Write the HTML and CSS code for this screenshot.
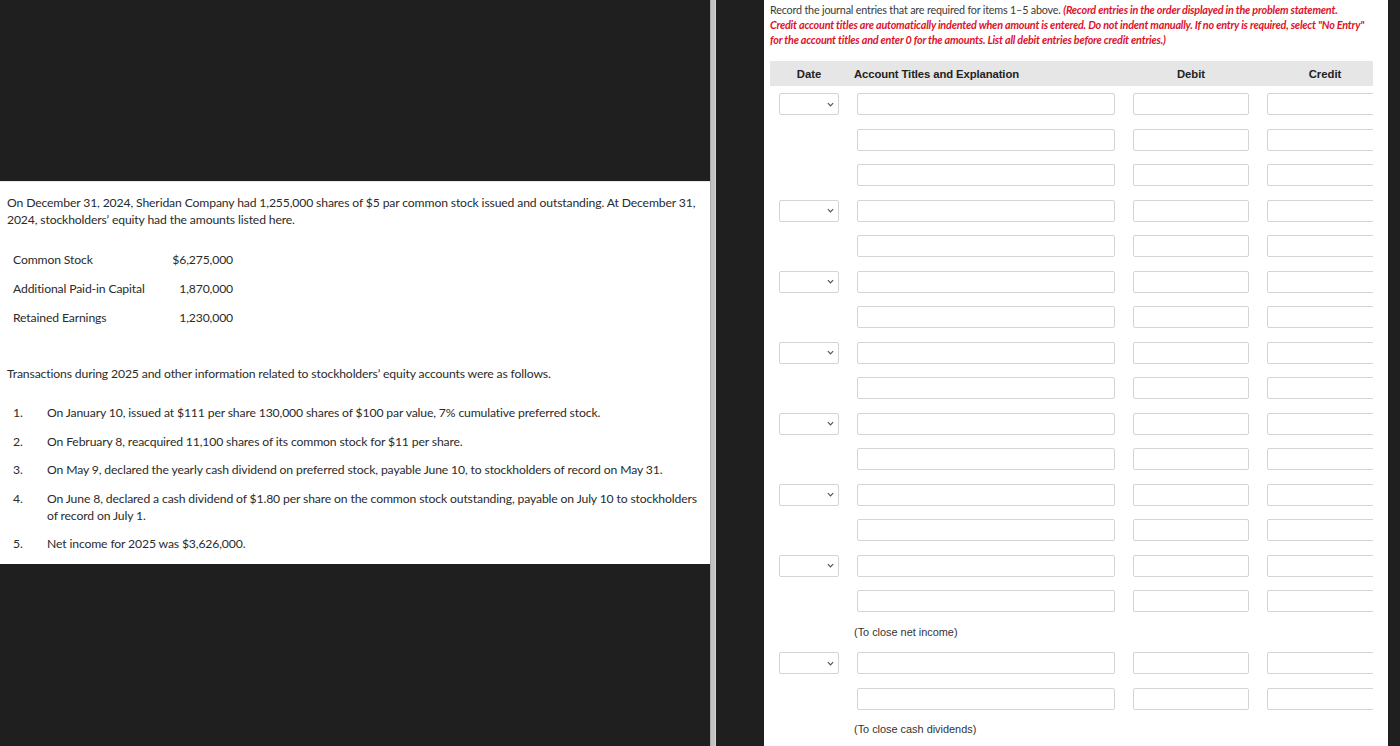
FILE: index.html
```html
<!DOCTYPE html>
<html>
<head>
<meta charset="utf-8">
<link rel="stylesheet" href="styles.css">
</head>
<body>
<div class="page">
  <div class="left-col">
    <div class="problem">
      <p class="intro">On December 31, 2024, Sheridan Company had 1,255,000 shares of $5 par common stock issued and outstanding. At December 31, 2024, stockholders’ equity had the amounts listed here.</p>
      <div class="equity">
        <div class="eq-row"><span class="eq-label">Common Stock</span><span class="eq-val">$6,275,000</span></div>
        <div class="eq-row"><span class="eq-label">Additional Paid-in Capital</span><span class="eq-val">1,870,000</span></div>
        <div class="eq-row"><span class="eq-label">Retained Earnings</span><span class="eq-val">1,230,000</span></div>
      </div>
      <p class="trans">Transactions during 2025 and other information related to stockholders’ equity accounts were as follows.</p>
      <ol class="items">
        <li><span class="num">1.</span><span class="txt">On January 10, issued at $111 per share 130,000 shares of $100 par value, 7% cumulative preferred stock.</span></li>
        <li><span class="num">2.</span><span class="txt">On February 8, reacquired 11,100 shares of its common stock for $11 per share.</span></li>
        <li><span class="num">3.</span><span class="txt">On May 9, declared the yearly cash dividend on preferred stock, payable June 10, to stockholders of record on May 31.</span></li>
        <li><span class="num">4.</span><span class="txt">On June 8, declared a cash dividend of $1.80 per share on the common stock outstanding, payable on July 10 to stockholders of record on July 1.</span></li>
        <li><span class="num">5.</span><span class="txt">Net income for 2025 was $3,626,000.</span></li>
      </ol>
    </div>
  </div>
  <div class="divider"></div>
  <div class="gap"></div>
  <div class="right-col">
    <p class="instr">Record the journal entries that are required for items 1–5 above. <em class="red">(Record entries in the order displayed in the problem statement.<br>Credit account titles are automatically indented when amount is entered. Do not indent manually. If no entry is required, select "No Entry"<br>for the account titles and enter 0 for the amounts. List all debit entries before credit entries.)</em></p>
    <div class="journal">
      <div class="jrow head">
        <div class="hc c-date">Date</div>
        <div class="hc c-acct">Account Titles and Explanation</div>
        <div class="hc c-amt">Debit</div>
        <div class="hc c-amt">Credit</div>
      </div>

      <div class="jrow"><div class="cell"><div class="sel"><svg class="chev" viewBox="0 0 8 5"><path d="M1 1l3 3 3-3" /></svg></div></div><div class="cell"><div class="box acct"></div></div><div class="cell"><div class="box amt"></div></div><div class="cell"><div class="box amt"></div></div></div>
      <div class="jrow"><div class="cell"></div><div class="cell"><div class="box acct"></div></div><div class="cell"><div class="box amt"></div></div><div class="cell"><div class="box amt"></div></div></div>
      <div class="jrow"><div class="cell"></div><div class="cell"><div class="box acct"></div></div><div class="cell"><div class="box amt"></div></div><div class="cell"><div class="box amt"></div></div></div>

      <div class="jrow"><div class="cell"><div class="sel"><svg class="chev" viewBox="0 0 8 5"><path d="M1 1l3 3 3-3" /></svg></div></div><div class="cell"><div class="box acct"></div></div><div class="cell"><div class="box amt"></div></div><div class="cell"><div class="box amt"></div></div></div>
      <div class="jrow"><div class="cell"></div><div class="cell"><div class="box acct"></div></div><div class="cell"><div class="box amt"></div></div><div class="cell"><div class="box amt"></div></div></div>

      <div class="jrow"><div class="cell"><div class="sel"><svg class="chev" viewBox="0 0 8 5"><path d="M1 1l3 3 3-3" /></svg></div></div><div class="cell"><div class="box acct"></div></div><div class="cell"><div class="box amt"></div></div><div class="cell"><div class="box amt"></div></div></div>
      <div class="jrow"><div class="cell"></div><div class="cell"><div class="box acct"></div></div><div class="cell"><div class="box amt"></div></div><div class="cell"><div class="box amt"></div></div></div>

      <div class="jrow"><div class="cell"><div class="sel"><svg class="chev" viewBox="0 0 8 5"><path d="M1 1l3 3 3-3" /></svg></div></div><div class="cell"><div class="box acct"></div></div><div class="cell"><div class="box amt"></div></div><div class="cell"><div class="box amt"></div></div></div>
      <div class="jrow"><div class="cell"></div><div class="cell"><div class="box acct"></div></div><div class="cell"><div class="box amt"></div></div><div class="cell"><div class="box amt"></div></div></div>

      <div class="jrow"><div class="cell"><div class="sel"><svg class="chev" viewBox="0 0 8 5"><path d="M1 1l3 3 3-3" /></svg></div></div><div class="cell"><div class="box acct"></div></div><div class="cell"><div class="box amt"></div></div><div class="cell"><div class="box amt"></div></div></div>
      <div class="jrow"><div class="cell"></div><div class="cell"><div class="box acct"></div></div><div class="cell"><div class="box amt"></div></div><div class="cell"><div class="box amt"></div></div></div>

      <div class="jrow"><div class="cell"><div class="sel"><svg class="chev" viewBox="0 0 8 5"><path d="M1 1l3 3 3-3" /></svg></div></div><div class="cell"><div class="box acct"></div></div><div class="cell"><div class="box amt"></div></div><div class="cell"><div class="box amt"></div></div></div>
      <div class="jrow"><div class="cell"></div><div class="cell"><div class="box acct"></div></div><div class="cell"><div class="box amt"></div></div><div class="cell"><div class="box amt"></div></div></div>

      <div class="jrow"><div class="cell"><div class="sel"><svg class="chev" viewBox="0 0 8 5"><path d="M1 1l3 3 3-3" /></svg></div></div><div class="cell"><div class="box acct"></div></div><div class="cell"><div class="box amt"></div></div><div class="cell"><div class="box amt"></div></div></div>
      <div class="jrow"><div class="cell"></div><div class="cell"><div class="box acct"></div></div><div class="cell"><div class="box amt"></div></div><div class="cell"><div class="box amt"></div></div></div>
      <div class="note">(To close net income)</div>

      <div class="jrow"><div class="cell"><div class="sel"><svg class="chev" viewBox="0 0 8 5"><path d="M1 1l3 3 3-3" /></svg></div></div><div class="cell"><div class="box acct"></div></div><div class="cell"><div class="box amt"></div></div><div class="cell"><div class="box amt"></div></div></div>
      <div class="jrow"><div class="cell"></div><div class="cell"><div class="box acct"></div></div><div class="cell"><div class="box amt"></div></div><div class="cell"><div class="box amt"></div></div></div>
      <div class="note">(To close cash dividends)</div>
    </div>
  </div>
  <div class="edge"></div>
</div>
</body>
</html>
```

FILE: styles.css
```css
* { box-sizing: border-box; }
html, body {
  margin: 0;
  padding: 0;
  background: #1f1f1f;
  overflow: hidden;
}
.page {
  display: flex;
  width: 1400px;
  height: 746px;
  background: #1f1f1f;
}
.left-col {
  width: 710px;
  flex: none;
  padding-top: 181px;
}
.problem {
  background: #ffffff;
  border-top: 1px solid #e6e6e6;
  height: 383px;
  padding: 12px 7px 0 7px;
  font-family: Lato, "Liberation Sans", sans-serif;
  font-size: 12.2px;
  line-height: 17px;
  color: #2b2b2b;
  letter-spacing: -0.14px;
}
.intro {
  margin: 0;
}
.equity {
  margin: 17px 0 0 6px;
}
.eq-row {
  display: flex;
  height: 29px;
  align-items: center;
}
.eq-label {
  width: 140px;
  white-space: nowrap;
}
.eq-val {
  width: 80px;
  text-align: right;
}
.trans {
  margin: 33px 0 0 0;
}
.items {
  list-style: none;
  margin: 22px 0 0 0;
  padding: 0;
}
.items li {
  display: flex;
  margin-bottom: 11.5px;
}
.num {
  width: 40px;
  padding-left: 6px;
  flex: none;
}
.txt {
  flex: 1;
}
.divider {
  width: 6px;
  flex: none;
  background: #c2c2c2;
  border-left: 1px solid #a9a9a9;
  border-right: 1px solid #d6d6d6;
}
.gap {
  width: 48px;
  flex: none;
}
.right-col {
  width: 624px;
  flex: none;
  background: #ffffff;
  padding: 2px 0 0 6px;
  font-family: Lato, "Liberation Sans", sans-serif;
}
.instr {
  margin: 0;
  width: 615px;
  white-space: nowrap;
  font-size: 10.8px;
  line-height: 15px;
  color: #3a3a3a;
  letter-spacing: -0.2px;
}
.red {
  color: #e0112b;
  font-weight: bold;
  font-style: italic;
}
.journal {
  margin-top: 14px;
  width: 603px;
  overflow: hidden;
}
.jrow {
  display: grid;
  grid-template-columns: 78px 276px 134px 134px;
  height: 35.5px;
}
.jrow.head {
  height: 25px;
  background: #e6e6e6;
  margin-bottom: 7px;
  align-items: center;
  font-family: "Liberation Sans", Arial, sans-serif;
  font-weight: bold;
  font-size: 11.3px;
  color: #222;
}
.hc { text-align: center; }
.hc.c-acct { text-align: left; padding-left: 6px; letter-spacing: -0.1px; }
.cell {
  padding-left: 9px;
}
.box, .sel {
  height: 22px;
  border: 1px solid #d4d4d4;
  border-radius: 2px;
  background: #fff;
}
.acct { width: 258px; }
.amt { width: 116px; }
.sel {
  width: 60px;
  display: flex;
  align-items: center;
  justify-content: flex-end;
  padding-right: 4px;
}
.chev {
  width: 7px;
  height: 5px;
  fill: none;
  stroke: #555;
  stroke-width: 1.4;
}
.note {
  height: 26.5px;
  line-height: 13px;
  padding-left: 84px;
  font-family: "Liberation Sans", Arial, sans-serif;
  font-size: 10.9px;
  color: #333;
}
.edge {
  flex: 1;
  background: #1f1f1f;
}
```
